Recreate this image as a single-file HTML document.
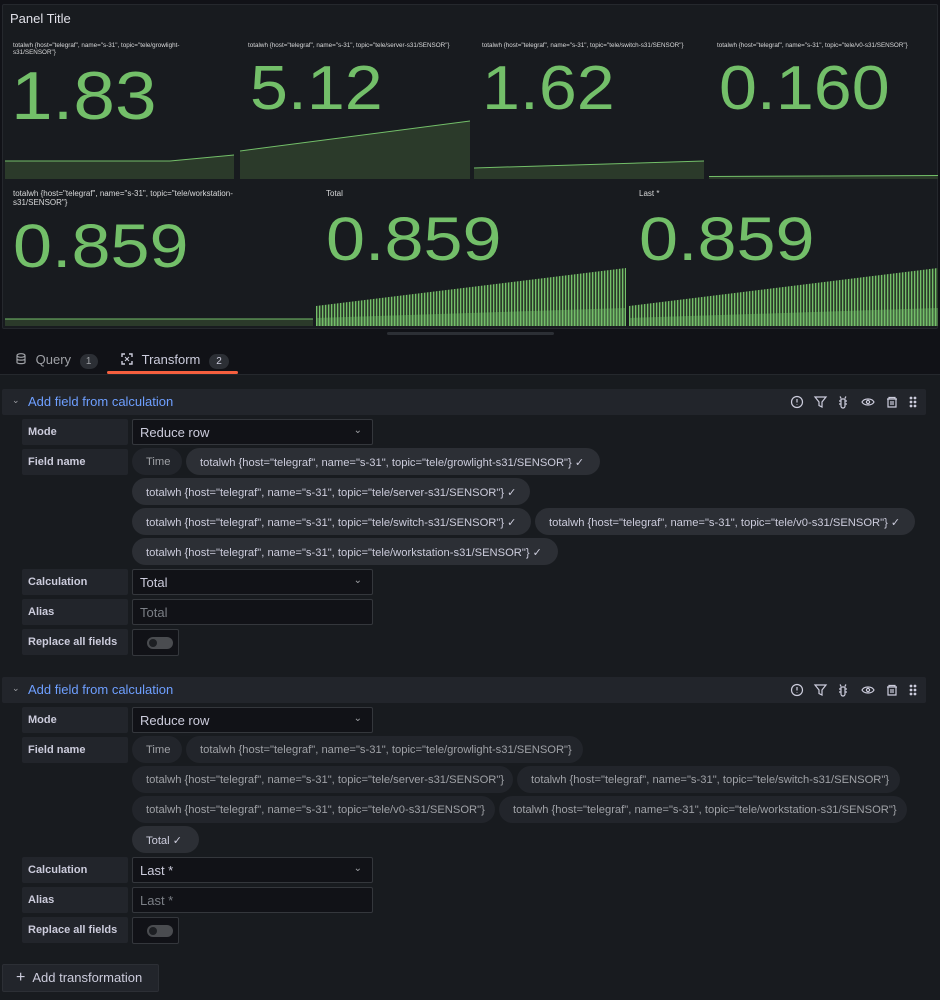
<!DOCTYPE html>
<html><head><meta charset="utf-8"><style>
*{box-sizing:border-box;margin:0;padding:0}
body{width:940px;height:1000px;background:#111217;font-family:"Liberation Sans",sans-serif;color:#ccccdc;position:relative;overflow:hidden}
.a{position:absolute}
.panel{left:2px;top:4px;width:936px;height:325px;background:#181b1f;border:1px solid #25282d;border-radius:2px}
.cell{position:absolute;overflow:hidden}
.lbl{position:absolute;font-size:6.3px;color:#d8d9da;line-height:7px;white-space:nowrap}
.val{position:absolute;color:#73bf69;font-size:66px;letter-spacing:0;line-height:1;transform:scaleX(1.1);transform-origin:0 0}
.sp{position:absolute;left:0;bottom:0;width:100%}
.sec{background:#181b1f}
.hdr{position:absolute;left:2px;width:924px;height:26px;background:#22252b;border-radius:2px}
.hdr .t{position:absolute;left:26px;top:5px;font-size:13px;color:#6e9fff}
.hdr .c{position:absolute;left:10px;top:6px;font-size:9px;color:#9fa1a6}
.L{position:absolute;left:22px;width:106px;height:26px;background:#22252b;border-radius:2px;font-size:11px;font-weight:bold;color:#ccccdc;padding:7px 0 0 6px}
.I{position:absolute;left:132px;width:241px;height:26px;background:#111217;border:1px solid #34373c;border-radius:2px;font-size:13px;padding:5px 0 0 7px}
.chip{position:absolute;height:27px;border-radius:14px;background:#22252b;font-size:11.2px;color:#9fa1a6;padding:8px 0 0 14px;white-space:nowrap}
.chip.s{background:#2c2f35;color:#ccccdc}
.tog{position:absolute;left:132px;width:47px;height:27px;background:#111217;border:1px solid #34373c;border-radius:2px}
.tog i{position:absolute;left:14px;top:7px;width:26px;height:12px;border-radius:6px;background:#4a4c50}
.tog i:after{content:"";position:absolute;left:2px;top:2px;width:8px;height:8px;border-radius:50%;background:#1d1f23}
.dd{position:absolute;right:10px;top:5px;font-size:10px;color:#9fa1a6}
</style></head><body>
<div class="a panel">
 <div class="a" style="left:7px;top:6px;font-size:13px;color:#e0e0e8">Panel Title</div>
 <div class="cell" style="left:2px;top:33px;width:229px;height:141px">
  <div class="lbl" style="left:8px;top:4px;width:190px;white-space:normal">totalwh {host="telegraf", name="s-31", topic="tele/growlight-s31/SENSOR"}</div>
  <div class="val" style="left:6px;top:24px;font-size:68px">1.83</div>
  <svg class="sp" height="30" viewBox="0 0 229 30" preserveAspectRatio="none"><path d="M0 12 L165 12 L229 6 L229 30 L0 30Z" fill="#2b3a2a"/><path d="M0 12 L165 12 L229 6" stroke="#73bf69" fill="none"/></svg>
 </div>
 <div class="cell" style="left:237px;top:33px;width:230px;height:141px">
  <div class="lbl" style="left:8px;top:4px">totalwh {host="telegraf", name="s-31", topic="tele/server-s31/SENSOR"}</div>
  <div class="val" style="left:10px;top:20px;font-size:62px">5.12</div>
  <svg class="sp" height="60" viewBox="0 0 230 60" preserveAspectRatio="none"><path d="M0 32 L230 2 L230 60 L0 60Z" fill="#2b3a2a"/><path d="M0 32 L230 2" stroke="#73bf69" fill="none"/></svg>
 </div>
 <div class="cell" style="left:471px;top:33px;width:230px;height:141px">
  <div class="lbl" style="left:8px;top:4px">totalwh {host="telegraf", name="s-31", topic="tele/switch-s31/SENSOR"}</div>
  <div class="val" style="left:8px;top:20px;font-size:62px">1.62</div>
  <svg class="sp" height="20" viewBox="0 0 230 20" preserveAspectRatio="none"><path d="M0 9 L230 2 L230 20 L0 20Z" fill="#2b3a2a"/><path d="M0 9 L230 2" stroke="#73bf69" fill="none"/></svg>
 </div>
 <div class="cell" style="left:706px;top:33px;width:229px;height:141px">
  <div class="lbl" style="left:8px;top:4px">totalwh {host="telegraf", name="s-31", topic="tele/v0-s31/SENSOR"}</div>
  <div class="val" style="left:10px;top:20px;font-size:62px">0.160</div>
  <svg class="sp" height="4" viewBox="0 0 229 4" preserveAspectRatio="none"><path d="M0 1 L229 0 L229 4 L0 4Z" fill="#2b3a2a"/><path d="M0 1.5 L229 0.5" stroke="#73bf69" fill="none"/></svg>
 </div>
 <div class="cell" style="left:2px;top:180px;width:308px;height:141px">
  <div class="lbl" style="left:8px;top:4px;font-size:8px;line-height:9px;width:260px;white-space:normal">totalwh {host="telegraf", name="s-31", topic="tele/workstation-s31/SENSOR"}</div>
  <div class="val" style="left:8px;top:31px;font-size:61px;transform:scaleX(1.15)">0.859</div>
  <svg class="sp" height="10" viewBox="0 0 308 10" preserveAspectRatio="none"><path d="M0 3 L308 3 L308 10 L0 10Z" fill="#2b3a2a"/><path d="M0 3 L308 3" stroke="#73bf69" fill="none"/></svg>
 </div>
 <div class="cell" style="left:313px;top:180px;width:310px;height:141px">
  <div class="lbl" style="left:10px;top:5px;font-size:8px">Total</div>
  <div class="val" style="left:10px;top:24px;font-size:61px;transform:scaleX(1.15)">0.859</div>
  <svg class="sp" height="58" viewBox="0 0 310 58" preserveAspectRatio="none"><defs><pattern id="st" width="3" height="58" patternUnits="userSpaceOnUse"><rect width="3" height="58" fill="#2b3a2a"/><rect width="1.3" height="58" fill="#73bf69"/></pattern></defs><path d="M0 38 L310 0 L310 58 L0 58Z" fill="url(#st)"/><path d="M0 50 L310 40 L310 58 L0 58Z" fill="#73bf69" opacity=".4"/></svg>
 </div>
 <div class="cell" style="left:626px;top:180px;width:309px;height:141px">
  <div class="lbl" style="left:10px;top:5px;font-size:8px">Last *</div>
  <div class="val" style="left:10px;top:24px;font-size:61px;transform:scaleX(1.15)">0.859</div>
  <svg class="sp" height="58" viewBox="0 0 309 58" preserveAspectRatio="none"><path d="M0 38 L309 0 L309 58 L0 58Z" fill="url(#st)"/><path d="M0 50 L309 40 L309 58 L0 58Z" fill="#73bf69" opacity=".4"/></svg>
 </div>
</div>
<div class="a" style="left:387px;top:332px;width:167px;height:3px;background:#2c2f35;border-radius:2px"></div>
<!-- tabs -->
<div class="a" style="left:16px;top:352px;font-size:13px;color:#9fa1a6">
 <svg width="10" height="12" viewBox="0 0 10 12" style="vertical-align:-1px"><ellipse cx="5" cy="2.5" rx="4" ry="1.8" fill="none" stroke="#9fa1a6" stroke-width="1.2"/><path d="M1 2.5V9.5C1 11 9 11 9 9.5V2.5M1 6C1 7.5 9 7.5 9 6" fill="none" stroke="#9fa1a6" stroke-width="1.2"/></svg>
 <span style="margin-left:6px">Query</span>
 <span style="display:inline-block;margin-left:5px;width:18px;height:15px;border-radius:8px;background:#2c2f35;font-size:10px;text-align:center;line-height:15px">1</span>
</div>
<div class="a" style="left:121px;top:352px;font-size:13px;color:#ccccdc">
 <svg width="12" height="12" viewBox="0 0 12 12" style="vertical-align:-1px"><path d="M1 4V1H4M8 1H11V4M11 8V11H8M4 11H1V8" fill="none" stroke="#ccccdc" stroke-width="1.4"/><path d="M4 4L8 8M8 4L4 8" stroke="#ccccdc" stroke-width="1"/></svg>
 <span style="margin-left:5px">Transform</span>
 <span style="display:inline-block;margin-left:5px;width:20px;height:15px;border-radius:8px;background:#2c2f35;font-size:10px;text-align:center;line-height:15px">2</span>
</div>
<div class="a" style="left:107px;top:371px;width:131px;height:3px;background:#f55f3e;border-radius:2px"></div>
<div class="a" style="left:0;top:374px;width:940px;height:1px;background:#25282d"></div>
<div class="a sec" style="left:0;top:375px;width:940px;height:625px"></div>

<!-- section 1 -->
<div class="hdr" style="top:389px"><span class="c">⌄</span><span class="t">Add field from calculation</span>
 <svg class="a" style="left:788px;top:6px" width="130" height="14" viewBox="0 0 130 14" fill="none" stroke="#ccccdc" stroke-width="1.2"><circle cx="7" cy="7" r="5.5"/><path d="M7 4v3.5M7 9.5v.5"/><path d="M25 2h11l-4 5v5l-3-1.5V7z"/><path d="M51 4h4v7a2 2 0 01-4 0zM49 6h2M55 6h2M49 9h2M55 9h2M51 3l-1-1.5M55 3l1-1.5"/><path d="M72 7c2-4 10-4 12 0c-2 4-10 4-12 0z"/><circle cx="78" cy="7" r="1.6"/><path d="M97 4h10M99 4V2.5h6V4M98 4v8h8V4M101 6v4M103 6v4"/><circle cx="121" cy="3" r=".8" fill="#ccccdc"/><circle cx="125" cy="3" r=".8" fill="#ccccdc"/><circle cx="121" cy="7" r=".8" fill="#ccccdc"/><circle cx="125" cy="7" r=".8" fill="#ccccdc"/><circle cx="121" cy="11" r=".8" fill="#ccccdc"/><circle cx="125" cy="11" r=".8" fill="#ccccdc"/></svg>
</div>
<div class="L" style="top:419px">Mode</div><div class="I" style="top:419px">Reduce row<span class="dd">⌄</span></div>
<div class="L" style="top:449px">Field name</div>
<div class="chip" style="left:132px;top:448px;width:50px">Time</div>
<div class="chip s" style="left:186px;top:448px;width:414px">totalwh {host="telegraf", name="s-31", topic="tele/growlight-s31/SENSOR"} ✓</div>
<div class="chip s" style="left:132px;top:478px;width:398px">totalwh {host="telegraf", name="s-31", topic="tele/server-s31/SENSOR"} ✓</div>
<div class="chip s" style="left:132px;top:508px;width:399px">totalwh {host="telegraf", name="s-31", topic="tele/switch-s31/SENSOR"} ✓</div>
<div class="chip s" style="left:535px;top:508px;width:380px">totalwh {host="telegraf", name="s-31", topic="tele/v0-s31/SENSOR"} ✓</div>
<div class="chip s" style="left:132px;top:538px;width:426px">totalwh {host="telegraf", name="s-31", topic="tele/workstation-s31/SENSOR"} ✓</div>
<div class="L" style="top:569px">Calculation</div><div class="I" style="top:569px">Total<span class="dd">⌄</span></div>
<div class="L" style="top:599px">Alias</div><div class="I" style="top:599px;color:#7b7f86">Total</div>
<div class="L" style="top:629px">Replace all fields</div><div class="tog" style="top:629px"><i></i></div>

<!-- section 2 -->
<div class="hdr" style="top:677px"><span class="c">⌄</span><span class="t">Add field from calculation</span>
 <svg class="a" style="left:788px;top:6px" width="130" height="14" viewBox="0 0 130 14" fill="none" stroke="#ccccdc" stroke-width="1.2"><circle cx="7" cy="7" r="5.5"/><path d="M7 4v3.5M7 9.5v.5"/><path d="M25 2h11l-4 5v5l-3-1.5V7z"/><path d="M51 4h4v7a2 2 0 01-4 0zM49 6h2M55 6h2M49 9h2M55 9h2M51 3l-1-1.5M55 3l1-1.5"/><path d="M72 7c2-4 10-4 12 0c-2 4-10 4-12 0z"/><circle cx="78" cy="7" r="1.6"/><path d="M97 4h10M99 4V2.5h6V4M98 4v8h8V4M101 6v4M103 6v4"/><circle cx="121" cy="3" r=".8" fill="#ccccdc"/><circle cx="125" cy="3" r=".8" fill="#ccccdc"/><circle cx="121" cy="7" r=".8" fill="#ccccdc"/><circle cx="125" cy="7" r=".8" fill="#ccccdc"/><circle cx="121" cy="11" r=".8" fill="#ccccdc"/><circle cx="125" cy="11" r=".8" fill="#ccccdc"/></svg>
</div>
<div class="L" style="top:707px">Mode</div><div class="I" style="top:707px">Reduce row<span class="dd">⌄</span></div>
<div class="L" style="top:737px">Field name</div>
<div class="chip" style="left:132px;top:736px;width:50px">Time</div>
<div class="chip" style="left:186px;top:736px;width:397px">totalwh {host="telegraf", name="s-31", topic="tele/growlight-s31/SENSOR"}</div>
<div class="chip" style="left:132px;top:766px;width:381px">totalwh {host="telegraf", name="s-31", topic="tele/server-s31/SENSOR"}</div>
<div class="chip" style="left:517px;top:766px;width:383px">totalwh {host="telegraf", name="s-31", topic="tele/switch-s31/SENSOR"}</div>
<div class="chip" style="left:132px;top:796px;width:363px">totalwh {host="telegraf", name="s-31", topic="tele/v0-s31/SENSOR"}</div>
<div class="chip" style="left:499px;top:796px;width:408px">totalwh {host="telegraf", name="s-31", topic="tele/workstation-s31/SENSOR"}</div>
<div class="chip s" style="left:132px;top:826px;width:67px">Total ✓</div>
<div class="L" style="top:857px">Calculation</div><div class="I" style="top:857px">Last *<span class="dd">⌄</span></div>
<div class="L" style="top:887px">Alias</div><div class="I" style="top:887px;color:#7b7f86">Last *</div>
<div class="L" style="top:917px">Replace all fields</div><div class="tog" style="top:917px"><i></i></div>

<div class="a" style="left:2px;top:964px;width:157px;height:28px;background:#22252b;border:1px solid #2c2f35;border-radius:2px;font-size:13px;color:#ccccdc;padding:5px 0 0 13px"><span style="font-size:16px;margin-right:7px;line-height:14px">+</span>Add transformation</div>
</body></html>
